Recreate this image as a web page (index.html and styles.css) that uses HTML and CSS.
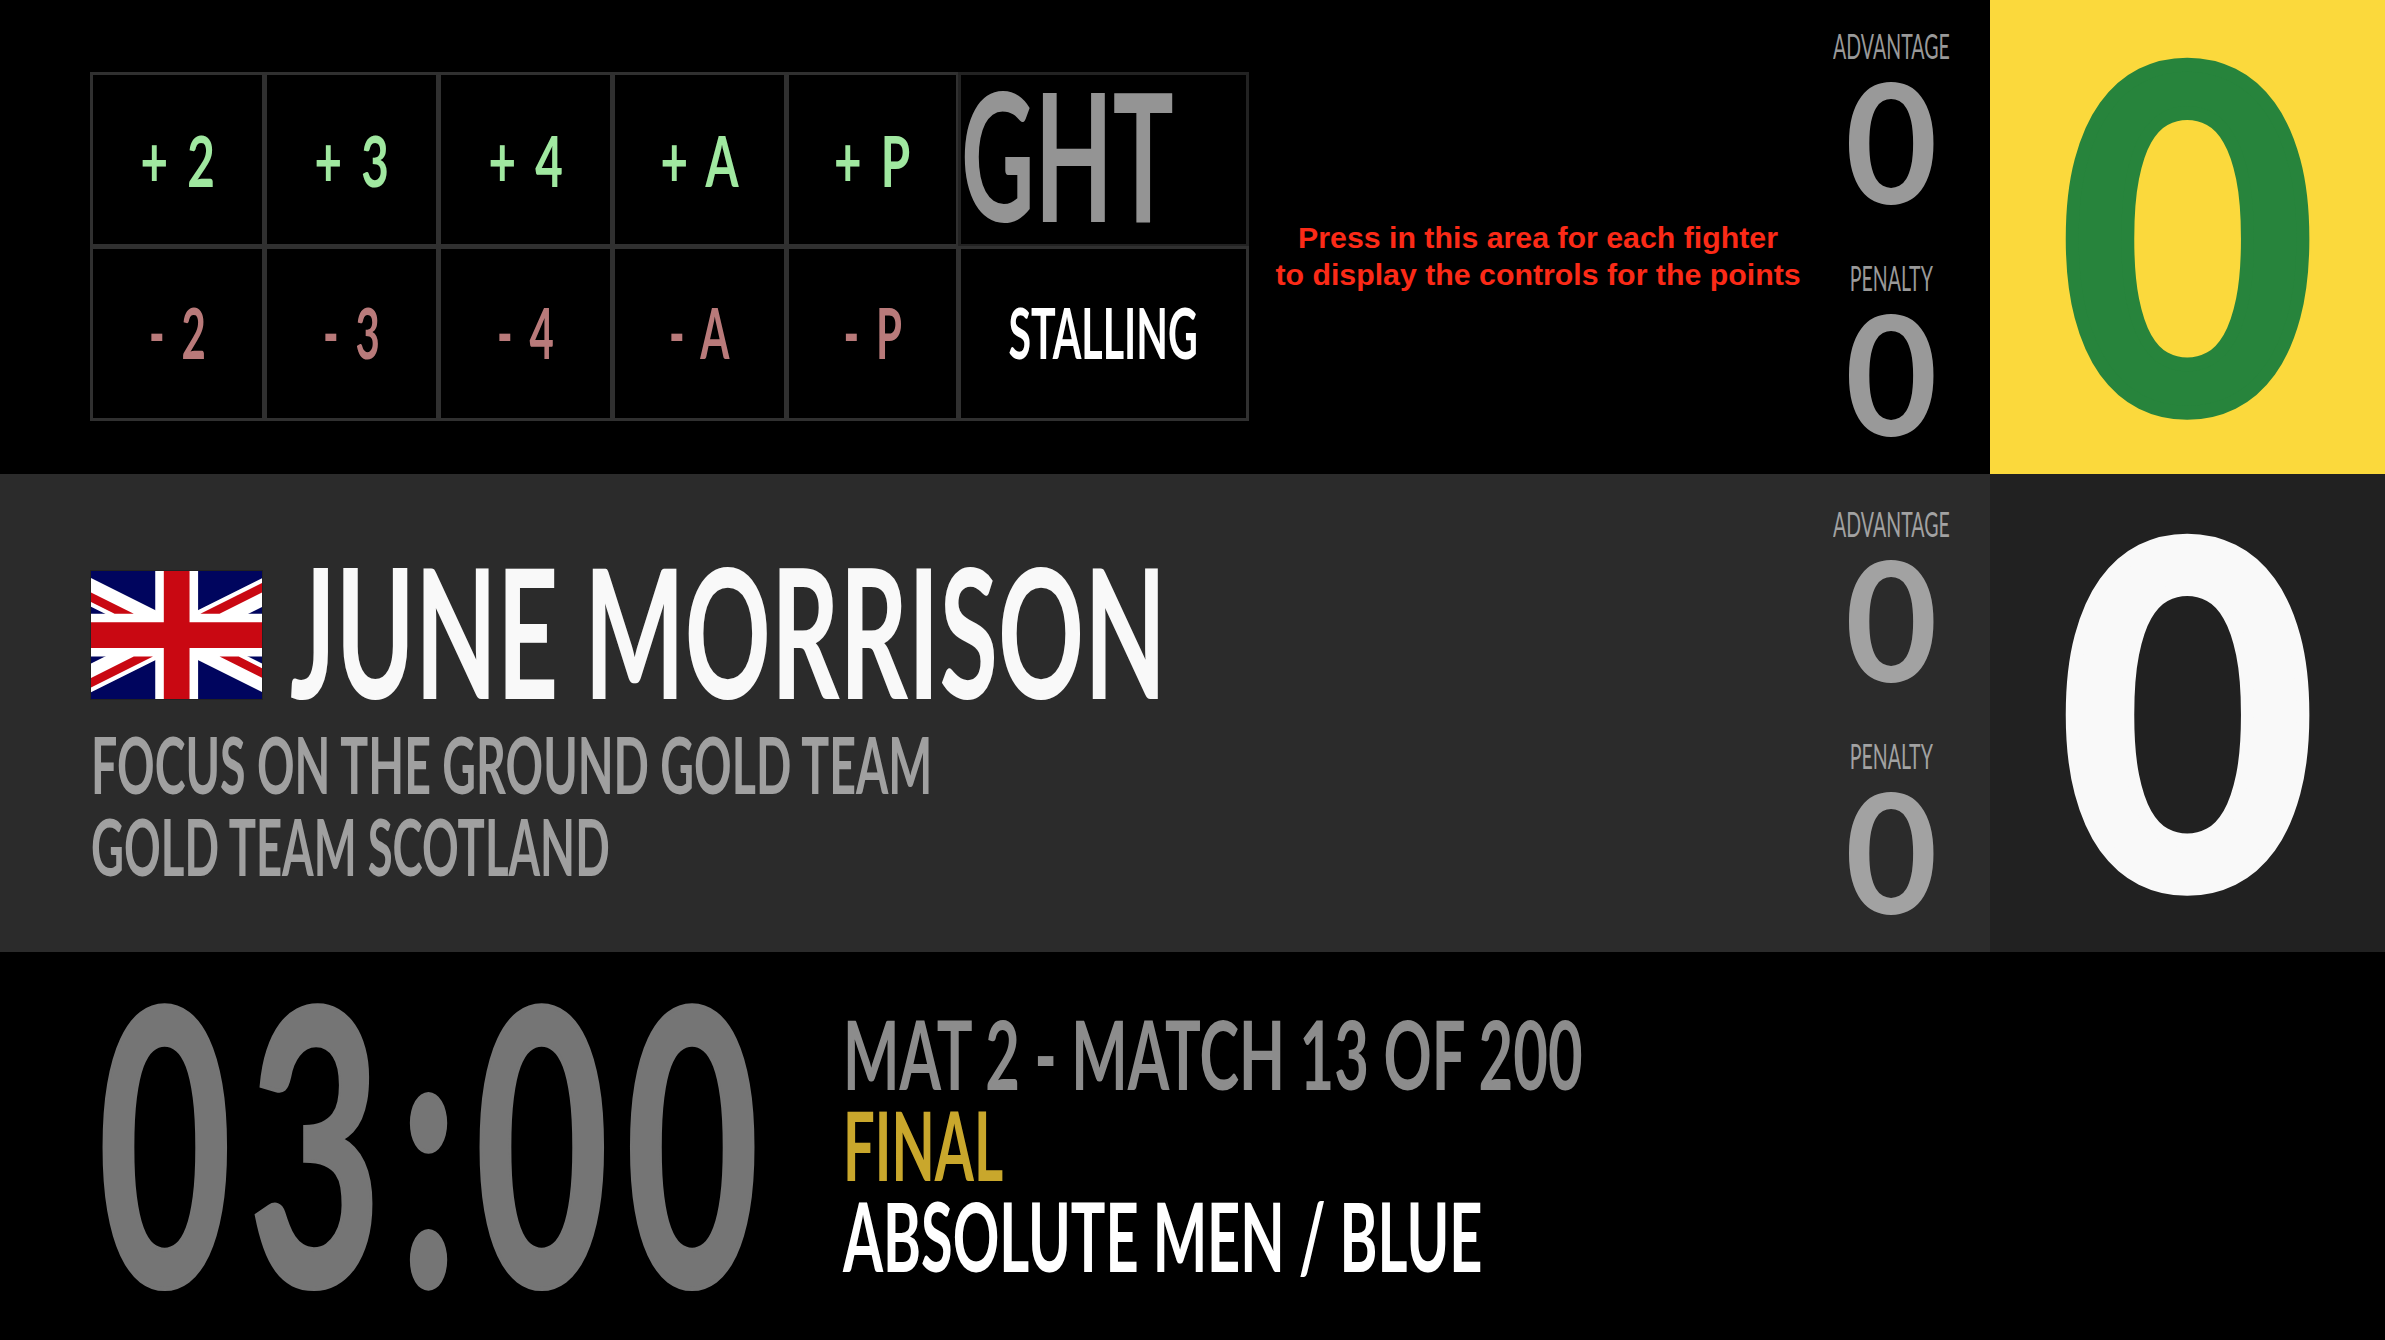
FILE: index.html
```html
<!DOCTYPE html>
<html lang="en">
<head>
<meta charset="utf-8">
<title>Scoreboard</title>
<link rel="stylesheet" href="styles.css">
</head>
<body>
<main class="board">
  <section class="row row-top">
    <div class="main main-top">
      <div class="controls">
        <div class="cell add"><span class="txt t-ctl">+ 2</span></div>
        <div class="cell add"><span class="txt t-ctl">+ 3</span></div>
        <div class="cell add"><span class="txt t-ctl">+ 4</span></div>
        <div class="cell add"><span class="txt t-ctl">+ A</span></div>
        <div class="cell add"><span class="txt t-ctl">+ P</span></div>
        <div class="cell wide fight"><span class="txt t-fight">GHT</span></div>
        <div class="cell sub"><span class="txt t-ctl">- 2</span></div>
        <div class="cell sub"><span class="txt t-ctl">- 3</span></div>
        <div class="cell sub"><span class="txt t-ctl">- 4</span></div>
        <div class="cell sub"><span class="txt t-ctl">- A</span></div>
        <div class="cell sub"><span class="txt t-ctl">- P</span></div>
        <div class="cell wide stall"><span class="txt t-stall">STALLING</span></div>
      </div>
      <p class="hint">Press in this area for each fighter<br>to display the controls for the points</p>
      <div class="tallies tallies-top">
        <div class="tally"><span class="txt t-label">ADVANTAGE</span><span class="txt t-num">0</span></div>
        <div class="tally"><span class="txt t-label">PENALTY</span><span class="txt t-num">0</span></div>
      </div>
    </div>
    <div class="score score-top"><span class="txt t-score">0</span></div>
  </section>

  <section class="row row-mid">
    <div class="main main-mid">
      <div class="fighter">
        <div class="name-line">
          <svg class="flag" viewBox="0 0 640 480" preserveAspectRatio="none" aria-hidden="true">
            <g transform="translate(80) scale(.94)">
              <path fill="#00055e" d="M-256 0H768v512H-256z"/>
              <path fill="#fff" d="M-256 0v57.2L653.5 512H768v-57.2L-141.5 0H-256zM768 0v57.2L-141.5 512H-256v-57.2L653.5 0H768z"/>
              <path fill="#fff" d="M170.7 0v512h170.6V0H170.7zM-256 170.7v170.6H768V170.7H-256z"/>
              <path fill="#c90812" d="M-256 204.8v102.4H768V204.8H-256zM204.8 0v512h102.4V0H204.8zM-256 512L85.3 341.3h76.4L-179.7 512H-256zm0-512L85.3 170.7H9L-256 38.2V0zm606.4 170.7L691.7 0H768L426.7 170.7h-76.3zM768 512L426.7 341.3H503l265 132.5V512z"/>
            </g>
          </svg>
          <span class="txt t-name">JUNE MORRISON</span>
        </div>
        <div class="txt t-team t-team1">FOCUS ON THE GROUND GOLD TEAM</div>
        <div class="txt t-team t-team2">GOLD TEAM SCOTLAND</div>
      </div>
      <div class="tallies tallies-mid">
        <div class="tally"><span class="txt t-label">ADVANTAGE</span><span class="txt t-num">0</span></div>
        <div class="tally"><span class="txt t-label">PENALTY</span><span class="txt t-num">0</span></div>
      </div>
    </div>
    <div class="score score-mid"><span class="txt t-score">0</span></div>
  </section>

  <section class="row row-bottom">
    <div class="clock"><span class="txt t-clock">03:00</span></div>
    <div class="info">
      <div class="txt t-info t-mat">MAT 2 - MATCH 13 OF 200</div>
      <div class="txt t-info t-final">FINAL</div>
      <div class="txt t-info t-cat">ABSOLUTE MEN / BLUE</div>
    </div>
  </section>
</main>
</body>
</html>
```
FILE: styles.css
```css
* { box-sizing: border-box; }
html, body { margin: 0; padding: 0; background: #000; }
body { width: 2385px; height: 1340px; overflow: hidden; font-family: "Lato", "Liberation Sans", sans-serif; }
.board { display: grid; grid-template-rows: 474px 478px 388px; width: 2385px; height: 1340px; }
.row { display: flex; min-width: 0; }
.main { display: flex; width: 1990px; flex: none; }
.score { width: 395px; flex: none; display: flex; align-items: center; justify-content: center; padding-bottom: 20px; }
.score-top { background: #fbd93c; color: #27843c; }
.score-mid { background: #212121; color: #f9f9f9; }
.main-top { background: #000; padding: 72px 0 0 90px; }
.main-mid { background: #2b2b2b; }

.txt { display: inline-block; white-space: nowrap; transform-origin: left center; }

.controls { display: grid; grid-template-columns: repeat(4, 174px) 172px 290px; grid-template-rows: 174px 174px; width: 1158px; height: 348px; flex: none; }
.cell { border: 3px solid #303030; margin: 0 -1px -1px 0; display: flex; align-items: center; justify-content: center; }
.add { color: #a0e8a0; }
.sub { color: #b97a7a; }
.fight { border-color: #222; color: #949494; justify-content: flex-start; align-items: flex-start; padding: 0; }
.stall { color: #fff; }

.t-ctl { font-size: 70px; line-height: 70px; font-weight: 700; word-spacing: .16em; transform: scaleX(.6); transform-origin: center; }
.add .t-ctl { transform: scaleX(.68); }
.sub .t-ctl { margin-bottom: 3px; }
.t-stall { font-size: 70px; line-height: 70px; margin-bottom: 4px; font-weight: 700; transform: scaleX(.588); transform-origin: center; }
.t-fight { font-size: 178px; line-height: 178px; font-weight: 700; transform: scaleX(.57); margin: -11px 0 0 0; }

.hint { margin: 148px 0 0 27px; width: 526px; flex: none; text-align: center; color: #fb2a17; font: 700 30.3px/36.5px "Liberation Sans", sans-serif; white-space: nowrap; }

.tallies { width: 160px; flex: none; margin: 0 19px 0 auto; }
.tallies-top { margin-top: -46px; }
.tallies-mid { padding-top: 30px; }
.tally { display: flex; flex-direction: column; align-items: center; color: #999; height: 232px; }
.tallies-mid .tally { color: #a2a2a2; }
.t-label { font-size: 34px; line-height: 40px; transform: scaleX(.575); transform-origin: center; }
.t-num { font-size: 166px; line-height: 147px; font-weight: 700; transform: scaleX(.96); transform-origin: center; }

.t-score { font-size: 471px; line-height: 400px; font-weight: 700; -webkit-text-stroke: 14px currentColor; transform: scaleX(.924); transform-origin: center; }

.fighter { padding: 96px 0 0 90px; }
.name-line { display: flex; align-items: center; }
.flag { width: 173px; height: 130px; flex: none; border: 1.5px solid #222; }
.t-name { font-size: 180px; line-height: 118px; margin-bottom: 12px; font-weight: 700; color: #f9f9f9; margin-left: 27px; transform: scaleX(.592); }
.t-team { display: block; font-size: 78px; line-height: 82px; font-weight: 700; color: #a0a0a0; margin-left: 1px; }
.t-team1 { margin-top: 23px; transform: scaleX(.597); }
.t-team2 { transform: scaleX(.583); }

.row-bottom { background: #000; }
.clock { padding: 0 0 0 98px; width: 843px; flex: none; }
.t-clock { font-size: 384px; line-height: 388px; margin-top: -8px; font-weight: 700; color: #757575; letter-spacing: 28px; -webkit-text-stroke: 4px currentColor; transform: scaleX(.6); }
.info { padding-top: 56px; }
.t-info { display: block; font-size: 95px; line-height: 91px; font-weight: 700; }
.t-mat { color: #8c8c8c; transform: scaleX(.629); }
.t-final { color: #c9a72c; transform: scaleX(.592); }
.t-cat { color: #fff; transform: scaleX(.607); }
```
